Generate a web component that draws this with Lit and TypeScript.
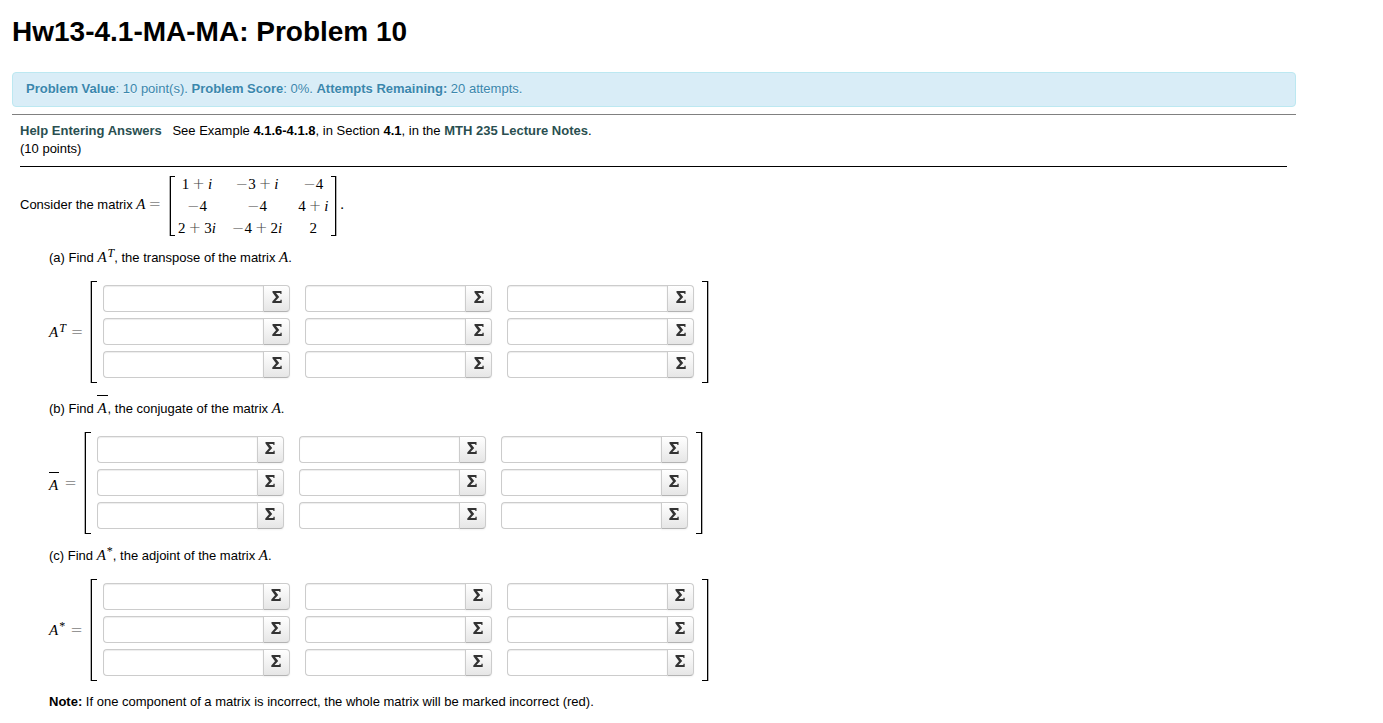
import { LitElement, html, css, type TemplateResult } from "lit";
import { customElement, property } from "lit/decorators.js";

@customElement("answer-matrix")
class AnswerMatrix extends LitElement {
  @property() name = "";

  static styles = css`
    :host {
      display: flex;
    }
    .bracket {
      width: 5px;
      border: 1px solid #000;
      border-right: 0;
      box-shadow: -1px 0 rgba(0, 0, 0, 0.3);
    }
    .bracket.right {
      border-left: 0;
      border-right: 1px solid #000;
      box-shadow: 1px 0 rgba(0, 0, 0, 0.3);
    }
    .cells {
      display: grid;
      grid-template-columns: repeat(3, 187px);
      gap: 6px 15px;
      padding: 4px 8px 5px 6px;
    }
    .cell {
      display: flex;
      height: 27px;
    }
    input {
      flex: 1;
      min-width: 0;
      box-sizing: border-box;
      margin: 0;
      padding: 2px 6px;
      border: 1px solid #ccc;
      border-right: 0;
      border-radius: 4px 0 0 4px;
      box-shadow: inset 0 1px 1px rgba(0, 0, 0, 0.075);
      background: #fff;
      font: 13px "Liberation Sans", Arial, sans-serif;
    }
    button {
      width: 27px;
      box-sizing: border-box;
      margin: 0;
      padding: 0;
      display: flex;
      justify-content: center;
      border: 1px solid #ccc;
      border-bottom-color: #b3b3b3;
      border-radius: 0 4px 4px 0;
      background: linear-gradient(#fff, #e6e6e6);
      box-shadow: 0 1px 2px rgba(0, 0, 0, 0.05);
      color: #333;
    }
    svg {
      width: 10px;
      height: 12px;
      margin-top: 5px;
      fill: currentColor;
    }
  `;

  render() {
    return html`
      <span class="bracket"></span>
      <div class="cells">
        ${Array.from({ length: 9 }, (_, i) => {
          const place = `${this.name} row ${Math.floor(i / 3) + 1} column ${(i % 3) + 1}`;
          return html`<div class="cell">
            <input type="text" aria-label=${place} />
            <button type="button" aria-label="Equation editor, ${place}">
              <svg viewBox="0 0 10 12" aria-hidden="true">
                <path d="M0.500 0H9.500V3H8.300V2H4L7.200 6L3.500 10H8.400V8.800H9.700V12H0.300V10.500L4 6.200L0.500 1.500Z" />
              </svg>
            </button>
          </div>`;
        })}
      </div>
      <span class="bracket right"></span>
    `;
  }
}

@customElement("app-root")
class AppRoot extends LitElement {
  static styles = css`
    :host {
      display: block;
      padding: 14px 87px 0 12px;
      background: #fff;
      color: #000;
      font: 13px/18px "Liberation Sans", Arial, sans-serif;
    }
    h1 {
      margin: 0 0 22px;
      font-size: 28px;
      line-height: 36px;
    }
    .score {
      padding: 7px 13px 8px;
      border: 1px solid #bce8f1;
      border-radius: 4px;
      background: #d9edf7;
      color: #3a87ad;
      text-shadow: 0 1px 0 rgba(255, 255, 255, 0.5);
    }
    .problem {
      margin-top: 7px;
      padding: 7px 9px 0 8px;
      border-top: 1px solid #808080;
    }
    a {
      color: #2a4f50;
      font-weight: bold;
      text-decoration: none;
    }
    .help {
      margin-right: 7px;
    }
    p {
      margin: 0;
    }
    hr {
      margin: 8px 0 9px;
      border: 0;
      border-top: 1px solid #000;
    }
    .row {
      display: flex;
      align-items: center;
    }
    .lead > span {
      padding-bottom: 4px;
    }
    .math {
      font-family: "Liberation Serif", "Times New Roman", serif;
      font-size: 15px;
      line-height: 18px;
    }
    .op {
      font-family: "DejaVu Sans", sans-serif;
      font-size: 15px;
      line-height: 18px;
      font-weight: 200;
      color: #444;
    }
    .plus {
      margin: 0 3px;
    }
    .eq {
      margin: 0 8px 0 3px;
    }
    .part .eq {
      margin-left: 5px;
    }
    sup {
      margin-left: 1px;
      font-size: 12px;
      line-height: 0;
      vertical-align: 5px;
    }
    .bar {
      display: inline-block;
      padding: 3px 1px 0 0;
      border-top: 1px solid #000;
    }
    .matrix {
      display: flex;
      border: solid #000;
      border-width: 0 1px;
      box-shadow: -1px 0 rgba(0, 0, 0, 0.3), 1px 0 rgba(0, 0, 0, 0.3);
      margin-left: 1px;
      padding: 0 7px;
      background: linear-gradient(#000, #000) 0 0 / 4px 1px no-repeat,
        linear-gradient(#000, #000) 100% 0 / 4px 1px no-repeat,
        linear-gradient(#000, #000) 0 100% / 4px 1px no-repeat,
        linear-gradient(#000, #000) 100% 100% / 4px 1px no-repeat;
    }
    .matrix table {
      border-collapse: collapse;
      margin: -3px 0;
    }
    .matrix td {
      padding: 0 8px;
      height: 22px;
      line-height: 22px;
      text-align: center;
      white-space: nowrap;
    }
    .matrix td:first-child {
      padding-left: 0;
    }
    .matrix td:last-child {
      padding-right: 0;
    }
    .part {
      padding-left: 29px;
    }
    .ask {
      margin: 12px 0 14px;
    }
  `;

  private a = html`<i class="math">A</i>`;

  private part(letter: string, symbol: TemplateResult, word: string, name: string) {
    return html`
      <p class="ask">(${letter}) Find ${symbol}, the ${word} of the matrix ${this.a}.</p>
      <div class="row">
        ${symbol}<span class="op eq">=</span>
        <answer-matrix name=${name}></answer-matrix>
      </div>
    `;
  }

  render() {
    const plus = html`<span class="op plus">+</span>`;
    const minus = html`<span class="op">−</span>`;
    const rows = [
      [html`1${plus}<i>i</i>`, html`${minus}3${plus}<i>i</i>`, html`${minus}4`],
      [html`${minus}4`, html`${minus}4`, html`4${plus}<i>i</i>`],
      [html`2${plus}3<i>i</i>`, html`${minus}4${plus}2<i>i</i>`, html`2`],
    ];
    return html`
      <h1>Hw13-4.1-MA-MA: Problem 10</h1>
      <div class="score">
        <b>Problem Value</b>: 10 point(s). <b>Problem Score</b>: 0%.
        <b>Attempts Remaining:</b> 20 attempts.
      </div>
      <main class="problem">
        <p>
          <a class="help" href="#help">Help Entering Answers</a>
          See Example <b>4.1.6-4.1.8</b>, in Section <b>4.1</b>, in the
          <a href="#notes">MTH 235 Lecture Notes</a>.
        </p>
        <p>(10 points)</p>
        <hr />
        <div class="row lead">
          <span>Consider the matrix ${this.a}</span><span class="op eq">=</span>
          <div class="matrix math">
            <table>
              ${rows.map((r) => html`<tr>${r.map((c) => html`<td>${c}</td>`)}</tr>`)}
            </table>
          </div>
          <span class="math">&nbsp;.</span>
        </div>
        <div class="part">
          ${this.part("a", html`<span class="math"><i>A</i><sup><i>T</i></sup></span>`, "transpose", "Transpose")}
          ${this.part("b", html`<span class="math bar"><i>A</i></span>`, "conjugate", "Conjugate")}
          ${this.part("c", html`<span class="math"><i>A</i><sup>*</sup></span>`, "adjoint", "Adjoint")}
          <p class="ask">
            <b>Note:</b> If one component of a matrix is incorrect, the whole matrix will be marked incorrect (red).
          </p>
        </div>
      </main>
    `;
  }
}
